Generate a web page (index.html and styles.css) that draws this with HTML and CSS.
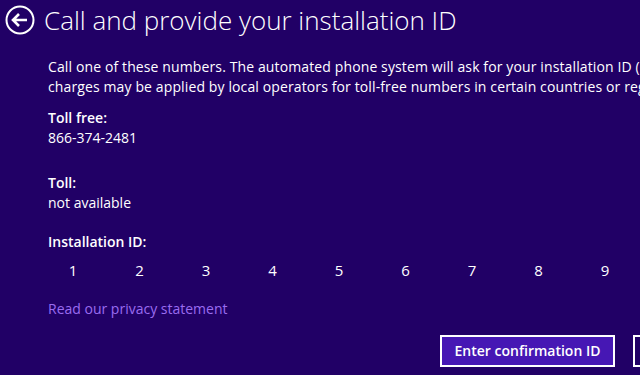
FILE: index.html
```html
<!DOCTYPE html>
<html lang="en">
<head>
<meta charset="utf-8">
<title>Call and provide your installation ID</title>
<link rel="stylesheet" href="styles.css">
</head>
<body>
<div class="page">
  <header class="header">
    <svg class="back" width="30" height="30" viewBox="0 0 30 30" aria-hidden="true">
      <circle cx="15" cy="15" r="13.5" fill="none" stroke="#fff" stroke-width="2"/>
      <path d="M8 15 H22 M14 9 L8 15 L14 21" fill="none" stroke="#fff" stroke-width="2.6" stroke-linejoin="miter" stroke-linecap="butt"/>
    </svg>
    <h1 class="title">Call and provide your installation ID</h1>
  </header>
  <main class="content">
    <p class="intro"><span class="line">Call one of these numbers. The automated phone system will ask for your installation ID (listed below). Additional</span><span class="line">charges may be applied by local operators for toll-free numbers in certain countries or regions.</span></p>
    <section class="field toll-free">
      <div class="label">Toll free:</div>
      <div class="value">866-374-2481</div>
    </section>
    <section class="field toll">
      <div class="label">Toll:</div>
      <div class="value">not available</div>
    </section>
    <section class="field install">
      <div class="label">Installation ID:</div>
      <div class="digits">
        <span>1</span><span>2</span><span>3</span><span>4</span><span>5</span><span>6</span><span>7</span><span>8</span><span>9</span>
      </div>
    </section>
    <a class="privacy" href="#">Read our privacy statement</a>
    <div class="actions">
      <button class="btn primary" type="button">Enter confirmation ID</button>
      <button class="btn" type="button">Cancel</button>
    </div>
  </main>
</div>
</body>
</html>
```
FILE: styles.css
```css
html, body {
  margin: 0;
  padding: 0;
  background: #210066;
  overflow: hidden;
}
.page {
  width: 640px;
  height: 375px;
  overflow: hidden;
  color: #fff;
  font-family: "Open Sans", "Noto Sans", sans-serif;
}
.header {
  display: flex;
  align-items: center;
  gap: 9px;
  padding: 4px 0 0 5px;
  height: 32px;
}
.back {
  flex: none;
  display: block;
}
.title {
  margin: 0;
  font-size: 26px;
  font-weight: 300;
  line-height: 32px;
  white-space: nowrap;
}
.content {
  padding-left: 48px;
  width: 900px;
}
.intro {
  margin: 21px 0 0 0;
  font-size: 14px;
  line-height: 20px;
  letter-spacing: 0.12px;
}
.line {
  display: block;
  white-space: nowrap;
}
.field {
  font-size: 14px;
  line-height: 20px;
}
.label {
  font-weight: 600;
}
.toll-free { margin-top: 11px; }
.toll { margin-top: 25px; }
.install { margin-top: 19px; }
.digits {
  display: flex;
  gap: 16.5px;
  margin-top: 8px;
  font-size: 15px;
}
.digits span {
  width: 50px;
  text-align: center;
}
.privacy {
  display: block;
  margin-top: 19px;
  font-size: 14px;
  line-height: 20px;
  color: #9a6cf0;
  text-decoration: none;
}
.actions {
  display: flex;
  gap: 18px;
  margin-top: 16px;
  margin-left: 392px;
}
.btn {
  flex: none;
  width: 175px;
  height: 32px;
  padding: 0;
  border: 2px solid #fff;
  background: transparent;
  color: #fff;
  font-family: inherit;
  font-size: 14px;
  font-weight: 600;
  line-height: 28px;
}
.btn.primary {
  background: #4617b4;
}
```
